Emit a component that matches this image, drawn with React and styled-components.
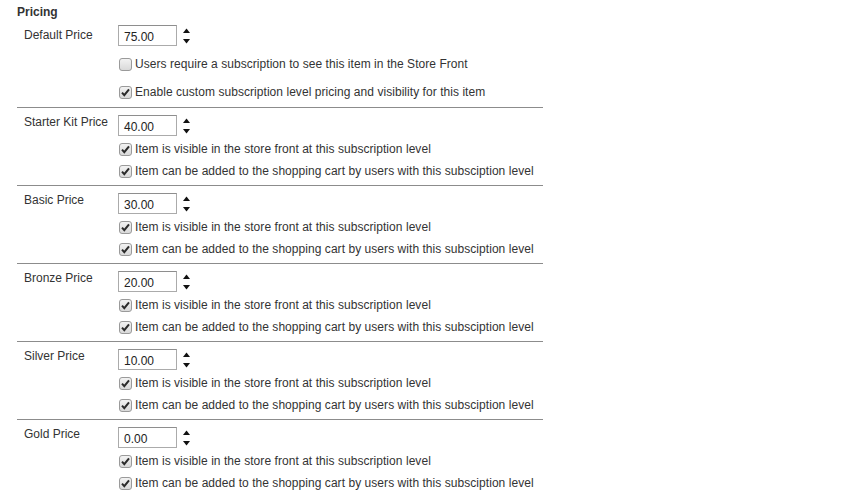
import React from 'react';
import styled, { createGlobalStyle } from 'styled-components';

const GlobalStyle = createGlobalStyle`
  body {
    margin: 0;
    background: #ffffff;
    font-family: "Liberation Sans", Arial, sans-serif;
    font-size: 12px;
    color: #333333;
  }
`;

const levels = [
  { name: 'Starter Kit Price', value: '40.00' },
  { name: 'Basic Price', value: '30.00' },
  { name: 'Bronze Price', value: '20.00' },
  { name: 'Silver Price', value: '10.00' },
  { name: 'Gold Price', value: '0.00' },
];

const Spinner = () => (
  <SpinnerIcon width="9" height="21" viewBox="0 0 9 21">
    <path d="M1 8 L4.5 3.5 L8 8 Z" fill="#111" />
    <path d="M1 14 L4.5 18.5 L8 14 Z" fill="#111" />
  </SpinnerIcon>
);

const PriceInput = ({ value }) => (
  <InputRow>
    <Input>{value}</Input>
    <Spinner />
  </InputRow>
);

const Check = ({ checked, label, $tall }) => (
  <CheckRow $tall={$tall}>
    <Box $checked={checked}>
      {checked && (
        <svg width="9" height="9" viewBox="0 0 9 9">
          <path d="M1 4.6 L3.3 7.2 L8 1.3" fill="none" stroke="#2b2b2b" strokeWidth="2" />
        </svg>
      )}
    </Box>
    <CheckLabel>{label}</CheckLabel>
  </CheckRow>
);

export default function App() {
  return (
    <>
      <GlobalStyle />
      <Page>
        <Heading>Pricing</Heading>
        <Section>
          <Label $top={3}>Default Price</Label>
          <Content>
            <PriceInput value="75.00" />
            <Checks $gap={4}>
              <Check $tall label="Users require a subscription to see this item in the Store Front" />
              <Check $tall checked label="Enable custom subscription level pricing and visibility for this item" />
            </Checks>
          </Content>
        </Section>
        {levels.map((level) => (
          <Section key={level.name} $bordered>
            <Label $top={0}>{level.name}</Label>
            <Content>
              <PriceInput value={level.value} />
              <Checks $gap={2}>
                <Check checked label="Item is visible in the store front at this subscription level" />
                <Check checked label="Item can be added to the shopping cart by users with this subsciption level" />
              </Checks>
            </Content>
          </Section>
        ))}
      </Page>
    </>
  );
}

const Page = styled.div`
  width: 526px;
  padding: 4px 0 0 17px;
  display: flex;
  flex-direction: column;
`;

const Heading = styled.div`
  font-weight: bold;
  font-size: 12px;
  line-height: 16px;
  color: #333;
  margin-bottom: 5px;
`;

const Section = styled.div`
  display: grid;
  grid-template-columns: 101px 1fr;
  border-top: ${(props) => (props.$bordered ? '1px solid #8c8c8c' : 'none')};
  padding: ${(props) => (props.$bordered ? '7px 0 3px' : '0 0 1px')};
`;

const Label = styled.div`
  padding-left: 7px;
  padding-top: ${(props) => props.$top}px;
  line-height: 14px;
  color: #333;
`;

const Content = styled.div`
  display: flex;
  flex-direction: column;
`;

const InputRow = styled.div`
  display: flex;
  align-items: center;
  height: 21px;
`;

const Input = styled.div`
  box-sizing: border-box;
  width: 59px;
  height: 21px;
  border: 1px solid #ababab;
  border-top-color: #8e8e8e;
  padding: 4px 0 0 5px;
  line-height: 14px;
  color: #222;
`;

const SpinnerIcon = styled.svg`
  margin-left: 5px;
`;

const Checks = styled.div`
  display: flex;
  flex-direction: column;
  padding-top: ${(props) => props.$gap}px;
`;

const CheckRow = styled.div`
  display: flex;
  align-items: center;
  height: ${(props) => (props.$tall ? '28px' : '22px')};
  padding-left: 1px;
`;

const Box = styled.span`
  box-sizing: border-box;
  width: 13px;
  height: 13px;
  border: 1px solid #9a9a9a;
  border-radius: 3px;
  background: linear-gradient(#f2f2f2, #d9d9d9);
  display: flex;
  align-items: center;
  justify-content: center;
  margin-right: 3px;
`;

const CheckLabel = styled.span`
  line-height: 14px;
  color: #333;
  white-space: nowrap;
  letter-spacing: 0.05px;
`;
